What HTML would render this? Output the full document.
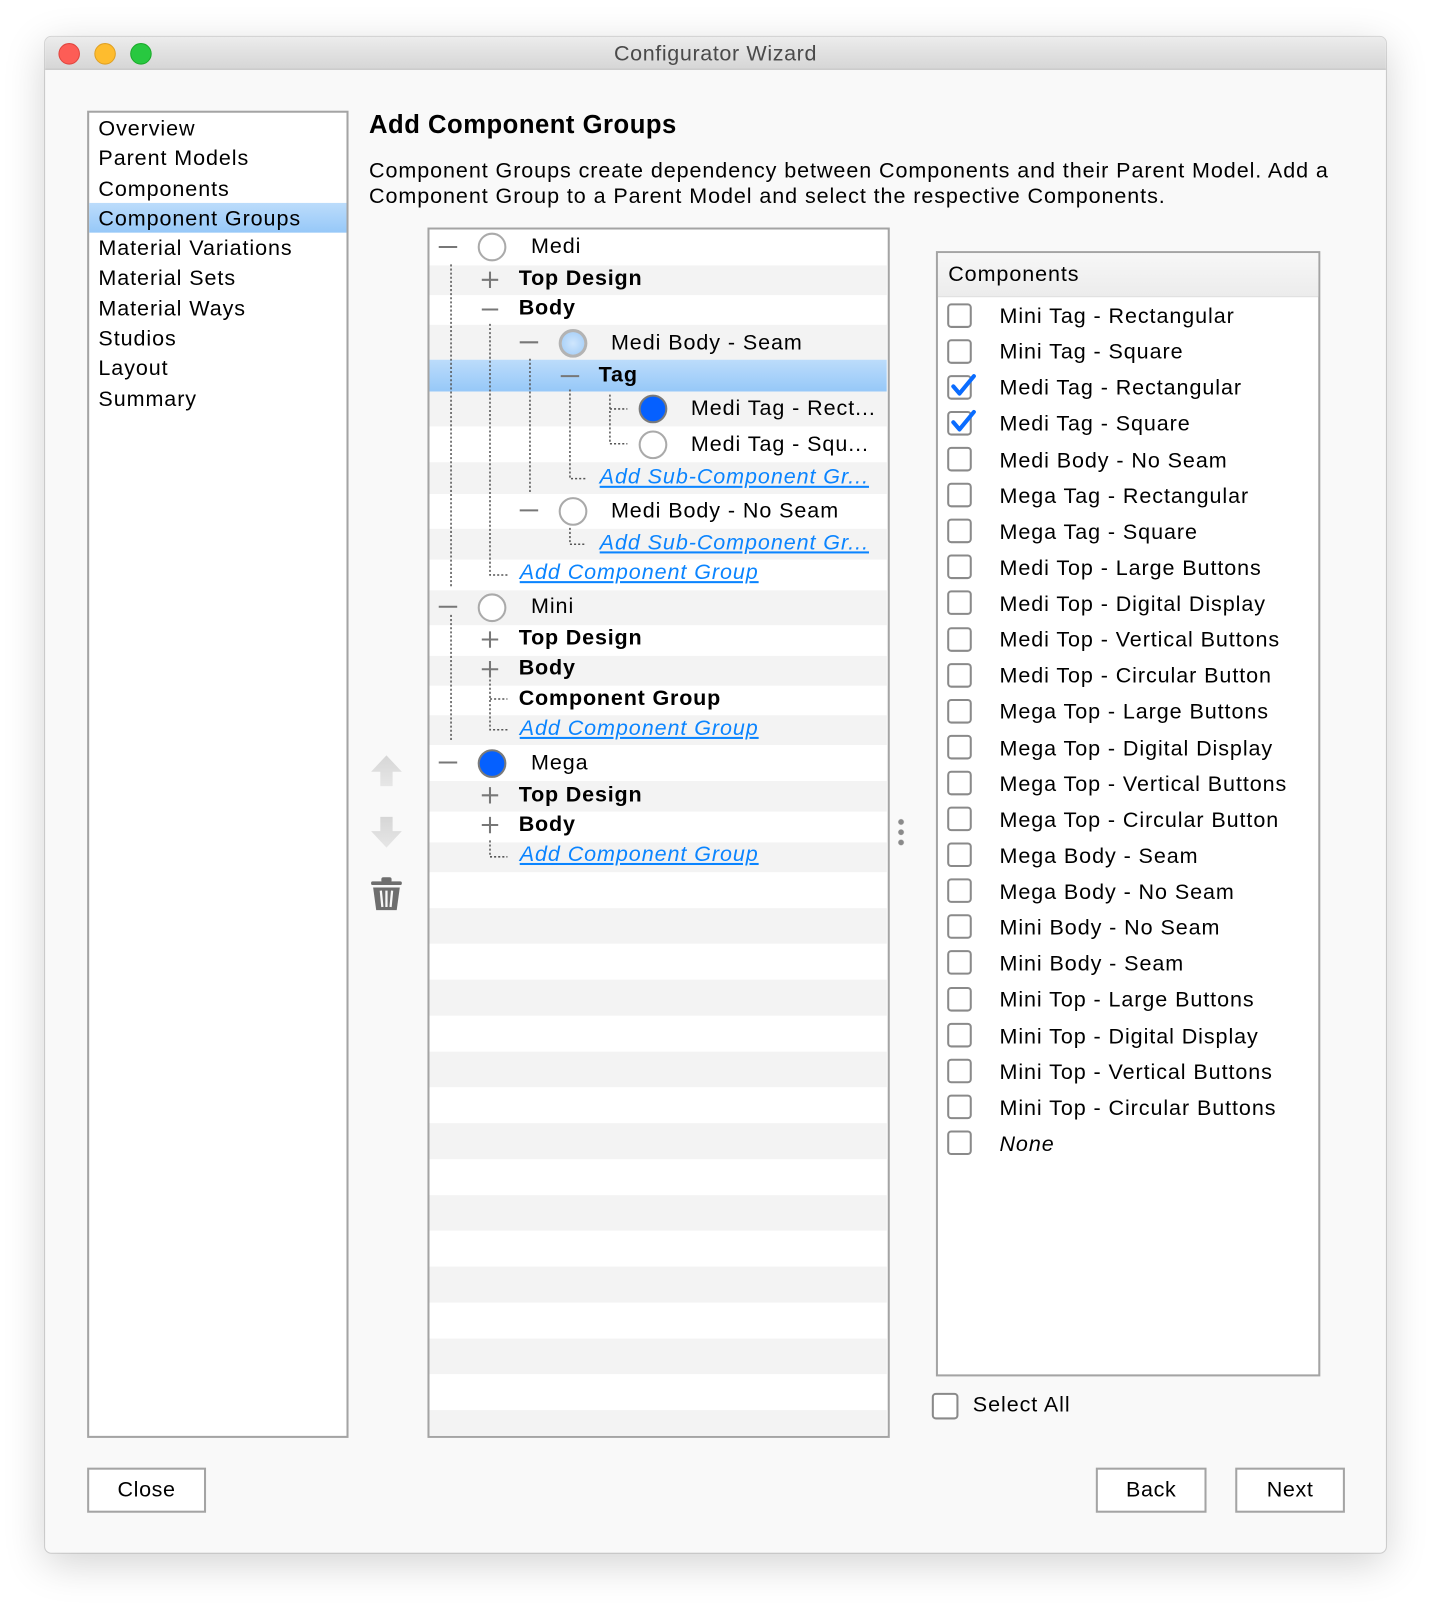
<!DOCTYPE html>
<html><head><meta charset="utf-8">
<style>
*{margin:0;padding:0;box-sizing:border-box}
html,body{width:1430px;height:1606px;overflow:hidden;background:#fff;font-family:"Liberation Sans",sans-serif;color:#000}
#s{position:absolute;left:0;top:0;width:1395px;height:1567px;transform:scale(1.02509,1.02489);transform-origin:0 0}
.win{position:absolute;left:44px;top:36px;width:1308px;height:1479px;background:#f9f9f9;border-radius:6px;box-shadow:0 10px 40px rgba(0,0,0,.18),0 0 0 1px rgba(0,0,0,.15);overflow:hidden}
.tb{position:absolute;left:0;top:0;width:100%;height:32px;background:linear-gradient(#ececec,#d6d6d6);border-bottom:1px solid #b8b8b8;text-align:center;font-size:21px;line-height:34px;color:#4a4a4a;letter-spacing:.6px}
.dot{position:absolute;top:6px;width:21px;height:21px;border-radius:50%}
.a{position:absolute;white-space:nowrap}
.box{position:absolute;border:2px solid #a4a4a4;background:#fff}
.t{font-size:21px;letter-spacing:.9px}
.b{font-weight:bold;letter-spacing:.8px}
.lnk{color:#0a84ff;font-style:italic;text-decoration:underline;font-size:21px;letter-spacing:.9px}
.row{position:absolute;left:0;width:446px}
.g{background:#f3f3f3}
.rad{position:absolute;width:28px;height:28px;border-radius:50%;border:2px solid #aaa;background:#fff}
.cb{position:absolute;left:11px;width:24px;height:24px;border:2.5px solid #8a8a8a;border-radius:4px;background:#fff}
.btn{position:absolute;height:44px;border:2px solid #a4a4a4;background:#fff;font-size:21px;text-align:center;line-height:40px;letter-spacing:.6px}
</style></head><body><div id="s">
<div class="win">
 <div class="tb">Configurator Wizard</div>
 <div class="dot" style="left:13px;background:#fd5d56;border:1px solid #e0443e"></div>
 <div class="dot" style="left:48px;background:#febc2e;border:1px solid #dfa023"></div>
 <div class="dot" style="left:83px;background:#28c840;border:1px solid #1aab29"></div>
</div>

<!-- left nav -->
<div class="box" style="left:85px;top:108px;width:255px;height:1295px">
 <div class="a" style="left:0;top:88px;width:251px;height:29px;background:linear-gradient(#bcdcfb,#96c8f8)"></div>
 <div class="a t" style="left:9px;top:1px;line-height:29.3px">Overview<br>Parent Models<br>Components<br>Component Groups<br>Material Variations<br>Material Sets<br>Material Ways<br>Studios<br>Layout<br>Summary</div>
</div>

<div class="a b" style="left:360px;top:108px;font-size:25px;letter-spacing:.5px">Add Component Groups</div>
<div class="a t" style="left:360px;top:154px;line-height:25px">Component Groups create dependency between Components and their Parent Model. Add a<br>Component Group to a Parent Model and select the respective Components.</div>

<!-- tree -->
<div class="box" style="left:417px;top:222px;width:451px;height:1181px;overflow:hidden">
 <div style="position:absolute;left:0;top:0;width:446px;height:1200px;background:repeating-linear-gradient(#fff 0 35px,#f3f3f3 35px 70px);background-position:0 627px"></div>
 <div class="row" style="top:0;height:35px;background:#fff"></div>
 <div class="row g" style="top:35px;height:29px"></div>
 <div class="row" style="top:64px;height:29px;background:#fff"></div>
 <div class="row g" style="top:93px;height:34px"></div>
 <div class="row" style="top:127px;height:31px;background:linear-gradient(#bcdcfb,#96c8f8)"></div>
 <div class="row g" style="top:158px;height:34px"></div>
 <div class="row" style="top:192px;height:35px;background:#fff"></div>
 <div class="row g" style="top:227px;height:31px"></div>
 <div class="row" style="top:258px;height:34px;background:#fff"></div>
 <div class="row g" style="top:292px;height:30px"></div>
 <div class="row" style="top:322px;height:30px;background:#fff"></div>
 <div class="row g" style="top:352px;height:34px"></div>
 <div class="row" style="top:386px;height:30px;background:#fff"></div>
 <div class="row g" style="top:416px;height:29px"></div>
 <div class="row" style="top:445px;height:29px;background:#fff"></div>
 <div class="row g" style="top:474px;height:29px"></div>
 <div class="row" style="top:503px;height:35px;background:#fff"></div>
 <div class="row g" style="top:538px;height:30px"></div>
 <div class="row" style="top:568px;height:30px;background:#fff"></div>
 <div class="row g" style="top:598px;height:29px"></div>
</div>
<svg class="a" style="left:0;top:0" width="1395" height="1567">
 <g stroke="#555" stroke-width="1.5" stroke-dasharray="2,2" fill="none">
  <path d="M440 258V572M478 316V561H495M517 350V480M556 380V467H572M595 385V433H612M595 399H612M556 515V531H572M440 600V724M478 655V712H495M478 682H495M478 820V836H495"/>
 </g>
 <g stroke="#777" stroke-width="2">
  <path d="M428 241H446M428 592H446M428 744H446M470 302H486M507 334H525M507 498H525M547 367H565"/>
  <path d="M470 273H486M478 265V281M470 624H486M478 616V632M470 653H486M478 645V661M470 776H486M478 768V784M470 805H486M478 797V813"/>
 </g>
</svg>
<div class="rad" style="left:466px;top:227px"></div>
<div class="rad" style="left:545px;top:321px;background:radial-gradient(#cfe6fd,#9fcbf7);border-color:#b3b3b3;border-width:3px"></div>
<div class="rad" style="left:623px;top:385px;background:#0560ff;border-color:#7a7a7a"></div>
<div class="rad" style="left:623px;top:420px"></div>
<div class="rad" style="left:545px;top:485px"></div>
<div class="rad" style="left:466px;top:579px"></div>
<div class="rad" style="left:466px;top:731px;background:#0560ff;border-color:#7a7a7a"></div>
<div class="a t" style="left:518px;top:229px">Medi</div>
<div class="a t b" style="left:506px;top:260px">Top Design</div>
<div class="a t b" style="left:506px;top:289px">Body</div>
<div class="a t" style="left:596px;top:323px">Medi Body - Seam</div>
<div class="a t b" style="left:584px;top:354px">Tag</div>
<div class="a t" style="left:674px;top:387px">Medi Tag - Rect...</div>
<div class="a t" style="left:674px;top:422px">Medi Tag - Squ...</div>
<div class="a lnk" style="left:585px;top:454px">Add Sub-Component Gr...</div>
<div class="a t" style="left:596px;top:487px">Medi Body - No Seam</div>
<div class="a lnk" style="left:585px;top:518px">Add Sub-Component Gr...</div>
<div class="a lnk" style="left:507px;top:547px">Add Component Group</div>
<div class="a t" style="left:518px;top:580px">Mini</div>
<div class="a t b" style="left:506px;top:611px">Top Design</div>
<div class="a t b" style="left:506px;top:640px">Body</div>
<div class="a t b" style="left:506px;top:670px">Component Group</div>
<div class="a lnk" style="left:507px;top:699px">Add Component Group</div>
<div class="a t" style="left:518px;top:733px">Mega</div>
<div class="a t b" style="left:506px;top:764px">Top Design</div>
<div class="a t b" style="left:506px;top:793px">Body</div>
<div class="a lnk" style="left:507px;top:822px">Add Component Group</div>

<!-- side icons -->
<svg class="a" style="left:360px;top:735px" width="36" height="160">
 <defs><linearGradient id="gr" x1="0" y1="0" x2="0" y2="1"><stop offset="0" stop-color="#d6d6d6"/><stop offset="1" stop-color="#e6e6e6"/></linearGradient></defs>
 <path d="M17 2L32 18H23V32H11V18H2Z" fill="url(#gr)"/>
 <path d="M11 62H23V76H32L17 92L2 76H11Z" fill="url(#gr)"/>
 <g fill="#6e6e6e"><rect x="2" y="125" width="30" height="3.5" rx="1.5"/><rect x="12" y="121" width="10" height="5" rx="2"/>
 <path d="M4 131H30L27 153H7Z"/></g>
 <g stroke="#f9f9f9" stroke-width="2.2"><path d="M11.5 134L13 150M17 134V150M22.5 134L21 150"/></g>
</svg>
<div class="a" style="left:876px;top:797px;width:6px;height:30px;background:radial-gradient(circle,#8a8a8a 2.5px,transparent 3px) 0 0/6px 10px"></div>

<!-- components -->
<div class="box" style="left:913px;top:245px;width:375px;height:1098px">
 <div style="height:43px;background:linear-gradient(#f7f7f7,#ececec);border-bottom:1px solid #dcdcdc"></div>
 <div class="a t" style="left:10px;top:9px">Components</div>
</div>
<div class="a" style="left:913px;top:290px;width:375px">
 <div class="cb" style="top:6px"></div><div class="cb" style="top:41px"></div>
 <div class="cb" style="top:76px"></div><div class="cb" style="top:111px"></div>
 <div class="cb" style="top:146px"></div><div class="cb" style="top:181px"></div>
 <div class="cb" style="top:216px"></div><div class="cb" style="top:251px"></div>
 <div class="cb" style="top:286px"></div><div class="cb" style="top:322px"></div>
 <div class="cb" style="top:357px"></div><div class="cb" style="top:392px"></div>
 <div class="cb" style="top:427px"></div><div class="cb" style="top:462px"></div>
 <div class="cb" style="top:497px"></div><div class="cb" style="top:532px"></div>
 <div class="cb" style="top:567px"></div><div class="cb" style="top:602px"></div>
 <div class="cb" style="top:637px"></div><div class="cb" style="top:673px"></div>
 <div class="cb" style="top:708px"></div><div class="cb" style="top:743px"></div>
 <div class="cb" style="top:778px"></div><div class="cb" style="top:813px"></div>
 <svg class="a" style="left:11px;top:72px" width="30" height="70"><g stroke="#0a6cff" stroke-width="4" fill="none" stroke-linecap="round" stroke-linejoin="round"><path d="M6 15L12 22L26 5M6 50L12 57L26 40"/></g></svg>
 <div class="a t" style="left:62px;top:1px;line-height:35.13px">Mini Tag - Rectangular<br>Mini Tag - Square<br>Medi Tag - Rectangular<br>Medi Tag - Square<br>Medi Body - No Seam<br>Mega Tag - Rectangular<br>Mega Tag - Square<br>Medi Top - Large Buttons<br>Medi Top - Digital Display<br>Medi Top - Vertical Buttons<br>Medi Top - Circular Button<br>Mega Top - Large Buttons<br>Mega Top - Digital Display<br>Mega Top - Vertical Buttons<br>Mega Top - Circular Button<br>Mega Body - Seam<br>Mega Body - No Seam<br>Mini Body - No Seam<br>Mini Body - Seam<br>Mini Top - Large Buttons<br>Mini Top - Digital Display<br>Mini Top - Vertical Buttons<br>Mini Top - Circular Buttons<br><i>None</i></div>
</div>
<div class="cb" style="left:909px;top:1359px;width:26px;height:26px"></div>
<div class="a t" style="left:949px;top:1359px">Select All</div>

<div class="btn" style="left:85px;top:1432px;width:116px">Close</div>
<div class="btn" style="left:1069px;top:1432px;width:108px">Back</div>
<div class="btn" style="left:1205px;top:1432px;width:107px">Next</div>
</div></body></html>
